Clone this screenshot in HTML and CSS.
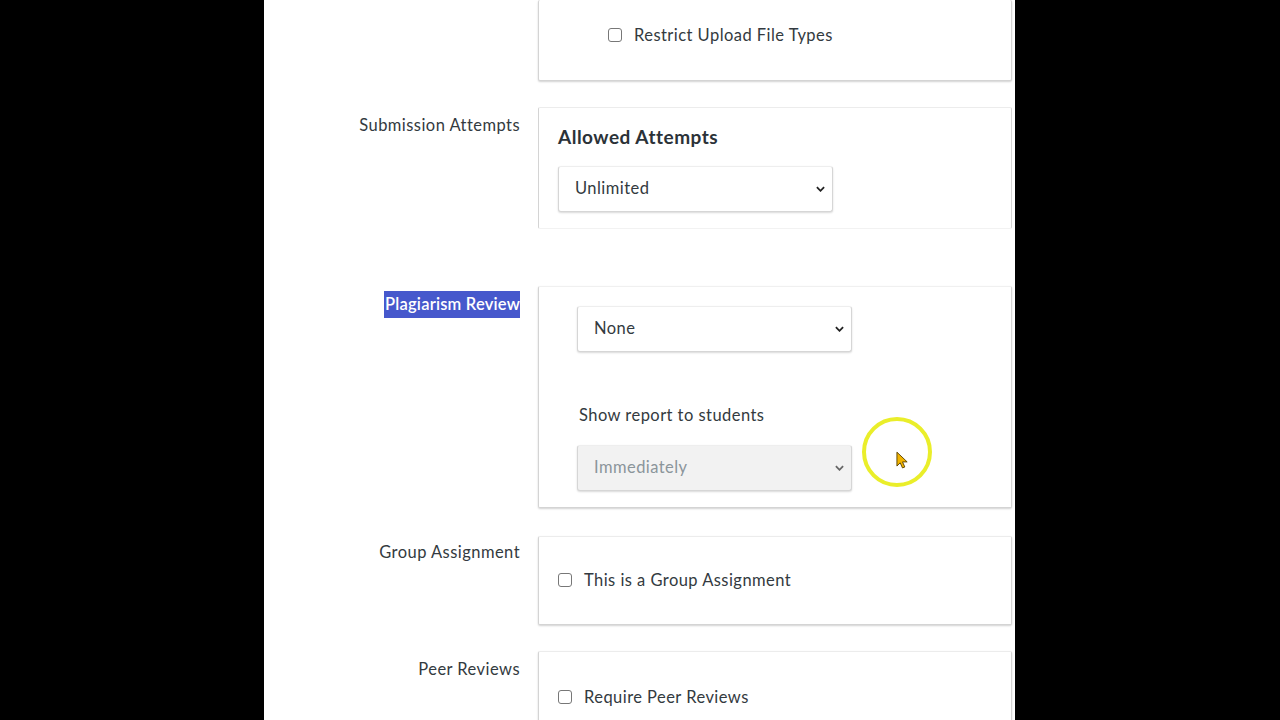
FILE: index.html
```html
<!DOCTYPE html>
<html>
<head>
<meta charset="utf-8">
<link rel="stylesheet" href="styles.css">
</head>
<body>
<div class="page">
  <div class="form">
    <div class="row row-upload">
      <div class="label"></div>
      <div class="panel panel-upload">
        <label class="check indent"><span class="box"></span><span>Restrict Upload File Types</span></label>
      </div>
    </div>

    <div class="row row-attempts">
      <div class="label">Submission Attempts</div>
      <div class="panel panel-attempts">
        <h3 class="heading">Allowed Attempts</h3>
        <div class="select"><span>Unlimited</span><svg class="chev" viewBox="0 0 10 6" width="9" height="6"><path d="M1 1 L5 5 L9 1" fill="none" stroke="#222" stroke-width="2"/></svg></div>
      </div>
    </div>

    <div class="row row-plag">
      <div class="label"><span class="hl">Plagiarism Review</span></div>
      <div class="panel panel-plag">
        <div class="select"><span>None</span><svg class="chev" viewBox="0 0 10 6" width="9" height="6"><path d="M1 1 L5 5 L9 1" fill="none" stroke="#222" stroke-width="2"/></svg></div>
        <div class="sublabel">Show report to students</div>
        <div class="select disabled"><span>Immediately</span><svg class="chev" viewBox="0 0 10 6" width="9" height="6"><path d="M1 1 L5 5 L9 1" fill="none" stroke="#666" stroke-width="2"/></svg></div>
      </div>
    </div>

    <div class="row row-group">
      <div class="label">Group Assignment</div>
      <div class="panel panel-group">
        <label class="check"><span class="box"></span><span>This is a Group Assignment</span></label>
      </div>
    </div>

    <div class="row row-peer">
      <div class="label">Peer Reviews</div>
      <div class="panel panel-peer">
        <label class="check"><span class="box"></span><span>Require Peer Reviews</span></label>
      </div>
    </div>
  </div>

  <div class="cursor-ring"></div>
  <svg class="cursor" viewBox="0 0 14 20" width="13" height="19"><path d="M1 1 L1 16 L4.5 12.5 L7 18 L9.5 17 L7 11.5 L12 11.5 Z" fill="#f2b400" stroke="#5a4200" stroke-width="1"/></svg>
</div>
</body>
</html>
```

FILE: styles.css
```css
html, body {
  margin: 0;
  padding: 0;
  background: #000;
  height: 720px;
  overflow: hidden;
}
.page {
  position: relative;
  margin-left: 264px;
  width: 751px;
  height: 720px;
  background: #fff;
  font-family: Lato, "Open Sans", sans-serif;
  color: #333a40;
  overflow: hidden;
}
.form {
  display: flex;
  flex-direction: column;
}
.row {
  display: grid;
  grid-template-columns: 256px 474px;
  column-gap: 18px;
}
.label {
  text-align: right;
  font-size: 16.5px;
  letter-spacing: 0.45px;
  line-height: 20px;
  color: #333a40;
}
.panel {
  box-sizing: border-box;
  border: 1px solid #d4d4d4;
  border-top-color: #ececec;
  border-radius: 2px;
  box-shadow: 0 1px 2px rgba(0,0,0,0.18);
  background: #fff;
}
.row-upload .panel {
  height: 81px;
  border-top: none;
  padding-top: 25px;
}
.check {
  display: flex;
  align-items: center;
  gap: 12px;
  font-size: 16.5px;
  letter-spacing: 0.45px;
  line-height: 20px;
  color: #333a40;
}
.check.indent {
  padding-left: 69px;
}
.box {
  box-sizing: border-box;
  width: 14px;
  height: 14px;
  border: 1px solid #777;
  border-radius: 3px;
  background: #fff;
  flex: none;
}
.row-attempts { margin-top: 26px; }
.row-attempts .label { padding-top: 8px; }
.panel-attempts {
  height: 122px;
  padding: 17px 0 0 19px;
  box-shadow: none;
  border-bottom-color: #f2f2f2;
}
.heading {
  margin: 0 0 17px 0;
  font-size: 19px;
  letter-spacing: 0.5px;
  line-height: 24px;
  font-weight: 700;
  color: #2b3238;
}
.select {
  box-sizing: border-box;
  width: 275px;
  height: 46px;
  border: 1px solid #d6d6d6;
  border-top-color: #eeeeee;
  border-radius: 3px;
  box-shadow: 0 1px 2px rgba(0,0,0,0.15);
  display: flex;
  align-items: center;
  justify-content: space-between;
  padding: 0 7px 0 16px;
  font-size: 16.5px;
  letter-spacing: 0.45px;
  color: #333a40;
  background: #fff;
}
.select span {
  margin-top: -2px;
}
.select.disabled {
  background: #f2f2f2;
  color: #8b959b;
}
.row-plag { margin-top: 57px; }
.row-plag .label { padding-top: 5px; }
.hl {
  display: inline-block;
  background: #4658cc;
  color: #fff;
  padding: 3px 0 4px 1px;
  font-weight: 600;
  letter-spacing: 0.2px;
}
.panel-plag {
  height: 222px;
  padding: 19px 0 0 38px;
  border-top-color: #f0f0f0;
}
.sublabel {
  margin: 53px 0 20px 2px;
  font-size: 16.5px;
  letter-spacing: 0.45px;
  line-height: 20px;
  color: #333a40;
}
.row-group { margin-top: 28px; }
.row-group .label { padding-top: 6px; }
.panel-group {
  height: 89px;
  padding: 33px 0 0 19px;
}
.row-peer { margin-top: 26px; }
.row-peer .label { padding-top: 8px; }
.panel-peer {
  height: 100px;
  padding: 35px 0 0 19px;
}
.cursor-ring {
  position: absolute;
  left: 598px;
  top: 417px;
  width: 70px;
  height: 70px;
  box-sizing: border-box;
  border: 4px solid #eaee2a;
  border-radius: 50%;
}
.cursor {
  position: absolute;
  left: 632px;
  top: 451px;
}
```
